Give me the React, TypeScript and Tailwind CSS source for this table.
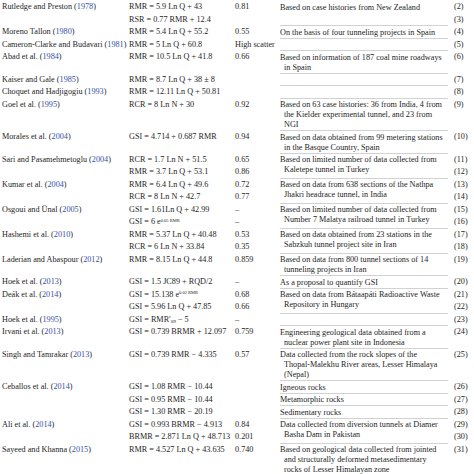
import type { ReactNode } from "react";

type Row = { eq: ReactNode; r?: string; n: number };
type Group = { author?: string; year?: string; rows: Row[]; desc?: string[] };

const rowSpan: Record<number, string> = {
  1: "row-span-1",
  2: "row-span-2",
  3: "row-span-3",
};

const groups: Group[] = [
  {
    author: "Rutledge and Preston",
    year: "1978",
    rows: [
      { eq: "RMR = 5.9 Ln Q + 43", r: "0.81", n: 2 },
      { eq: "RSR = 0.77 RMR + 12.4", n: 3 },
    ],
    desc: ["Based on case histories from New Zealand"],
  },
  {
    author: "Moreno Tallon",
    year: "1980",
    rows: [{ eq: "RMR = 5.4 Ln Q + 55.2", r: "0.55", n: 4 }],
    desc: ["On the basis of four tunneling projects in Spain"],
  },
  {
    author: "Cameron-Clarke and Budavari",
    year: "1981",
    rows: [{ eq: "RMR = 5 Ln Q + 60.8", r: "High scatter", n: 5 }],
  },
  {
    author: "Abad et al.",
    year: "1984",
    rows: [{ eq: "RMR = 10.5 Ln Q + 41.8", r: "0.66", n: 6 }],
    desc: ["Based on information of 187 coal mine roadways", "in Spain"],
  },
  {
    author: "Kaiser and Gale",
    year: "1985",
    rows: [{ eq: "RMR = 8.7 Ln Q + 38 ± 8", n: 7 }],
  },
  {
    author: "Choquet and Hadjigogiu",
    year: "1993",
    rows: [{ eq: "RMR = 12.11 Ln Q + 50.81", n: 8 }],
  },
  {
    author: "Goel et al.",
    year: "1995",
    rows: [{ eq: "RCR = 8 Ln N + 30", r: "0.92", n: 9 }],
    desc: [
      "Based on 63 case histories: 36 from India, 4 from",
      "the Kielder experimental tunnel, and 23 from",
      "NGI",
    ],
  },
  {
    author: "Morales et al.",
    year: "2004",
    rows: [{ eq: "GSI = 4.714 + 0.687 RMR", r: "0.94", n: 10 }],
    desc: [
      "Based on data obtained from 99 metering stations",
      "in the Basque Country, Spain",
    ],
  },
  {
    author: "Sari and Pasamehmetoglu",
    year: "2004",
    rows: [
      { eq: "RCR = 1.7 Ln N + 51.5", r: "0.65", n: 11 },
      { eq: "RMR = 3.7 Ln Q + 53.1", r: "0.86", n: 12 },
    ],
    desc: [
      "Based on limited number of data collected from",
      "Kaletepe tunnel in Turkey",
    ],
  },
  {
    author: "Kumar et al.",
    year: "2004",
    rows: [
      { eq: "RMR = 6.4 Ln Q + 49.6", r: "0.72", n: 13 },
      { eq: "RCR = 8 Ln N + 42.7", r: "0.77", n: 14 },
    ],
    desc: [
      "Based on data from 638 sections of the Nathpa",
      "Jhakri headrace tunnel, in India",
    ],
  },
  {
    author: "Osgoui and Ünal",
    year: "2005",
    rows: [
      { eq: "GSI = 1.61Ln Q + 42.99", r: "–", n: 15 },
      {
        eq: (
          <>
            GSI = 6 e<sup className="text-[4.5px]">0.05 RMR</sup>
          </>
        ),
        r: "–",
        n: 16,
      },
    ],
    desc: [
      "Based on limited number of data collected from",
      "Number 7 Malatya railroad tunnel in Turkey",
    ],
  },
  {
    author: "Hashemi et al.",
    year: "2010",
    rows: [
      { eq: "RMR = 5.37 Ln Q + 40.48", r: "0.53", n: 17 },
      { eq: "RCR = 6 Ln N + 33.84", r: "0.35", n: 18 },
    ],
    desc: [
      "Based on data obtained from 23 stations in the",
      "Sabzkuh tunnel project site in Iran",
    ],
  },
  {
    author: "Laderian and Abaspour",
    year: "2012",
    rows: [{ eq: "RMR = 8.15 Ln Q + 44.8", r: "0.859", n: 19 }],
    desc: [
      "Based on data from 800 tunnel sections of 14",
      "tunneling projects in Iran",
    ],
  },
  {
    author: "Hoek et al.",
    year: "2013",
    rows: [{ eq: "GSI = 1.5 JC89 + RQD/2", r: "–", n: 20 }],
    desc: ["As a proposal to quantify GSI"],
  },
  {
    author: "Deák et al.",
    year: "2014",
    rows: [
      {
        eq: (
          <>
            GSI = 15.138 e<sup className="text-[4.5px]">0.02 RMR</sup>
          </>
        ),
        r: "0.68",
        n: 21,
      },
      { eq: "GSI = 5.96 Ln Q + 47.85", r: "0.66", n: 22 },
    ],
    desc: [
      "Based on data from Bátaapáti Radioactive Waste",
      "Repository in Hungary",
    ],
  },
  {
    author: "Hoek et al.",
    year: "1995",
    rows: [
      {
        eq: (
          <>
            GSI = RMR′<sub className="text-[5px]">89</sub> − 5
          </>
        ),
        r: "–",
        n: 23,
      },
    ],
    desc: [],
  },
  {
    author: "Irvani et al.",
    year: "2013",
    rows: [{ eq: "GSI = 0.739 BRMR + 12.097", r: "0.759", n: 24 }],
    desc: [
      "Engineering geological data obtained from a",
      "nuclear power plant site in Indonesia",
    ],
  },
  {
    author: "Singh and Tamrakar",
    year: "2013",
    rows: [{ eq: "GSI = 0.739 RMR − 4.335", r: "0.57", n: 25 }],
    desc: [
      "Data collected from the rock slopes of the",
      "Thopal-Malekhu River areas, Lesser Himalaya",
      "(Nepal)",
    ],
  },
  {
    author: "Ceballos et al.",
    year: "2014",
    rows: [{ eq: "GSI = 1.08 RMR − 10.44", n: 26 }],
    desc: ["Igneous rocks"],
  },
  {
    rows: [{ eq: "GSI = 0.95 RMR − 10.44", n: 27 }],
    desc: ["Metamorphic rocks"],
  },
  {
    rows: [{ eq: "GSI = 1.30 RMR − 20.19", n: 28 }],
    desc: ["Sedimentary rocks"],
  },
  {
    author: "Ali et al.",
    year: "2014",
    rows: [
      { eq: "GSI = 0.993 BRMR − 4.913", r: "0.84", n: 29 },
      { eq: "BRMR = 2.871 Ln Q + 48.713", r: "0.201", n: 30 },
    ],
    desc: [
      "Data collected from diversion tunnels at Diamer",
      "Basha Dam in Pakistan",
    ],
  },
  {
    author: "Sayeed and Khanna",
    year: "2015",
    rows: [{ eq: "RMR = 4.527 Ln Q + 43.635", r: "0.740", n: 31 }],
    desc: [
      "Based on geological data collected from jointed",
      "and structurally deformed metasedimentary",
      "rocks of Lesser Himalayan zone",
    ],
  },
  {
    author: "Zhang et al.",
    year: "2019",
    rows: [
      {
        eq: (
          <>
            RMR′<sub className="text-[5px]">89</sub> = 0.827 GSI + 15.394
          </>
        ),
        r: "–",
        n: 32,
      },
    ],
    desc: [
      "Based on 260 groups of field investigating results",
      "collected and obtained from the tunnel face of six",
    ],
  },
];

function GroupRow({ g, first }: { g: Group; first: boolean }) {
  const span = Math.max(g.rows.length, 1);
  return (
    <div className="grid grid-cols-[127px_106px_45px_168px_1fr] items-start">
      <div className="col-start-1 row-start-1 whitespace-nowrap pt-[1px] leading-[11.5px]">
        {g.author}
        {g.year && (
          <>
            {" "}
            (<span className="text-[#3550a8]">{g.year}</span>)
          </>
        )}
      </div>
      {g.rows.map((row, i) => (
        <div key={row.n} className="contents">
          <div
            className={`col-start-2 whitespace-nowrap pt-[1px] leading-[11.5px] ${
              i === 0 ? "row-start-1" : "row-start-2"
            }`}
          >
            {row.eq}
          </div>
          <div
            className={`col-start-3 whitespace-nowrap pt-[1px] leading-[11.5px] ${
              i === 0 ? "row-start-1" : "row-start-2"
            }`}
          >
            {row.r}
          </div>
          <div
            className={`col-start-5 whitespace-nowrap pl-[6px] pt-[1px] leading-[11.5px] ${
              i === 0 ? "row-start-1" : "row-start-2"
            }`}
          >
            ({row.n})
          </div>
        </div>
      ))}
      <div
        className={`col-start-4 row-start-1 self-stretch pt-[1.5px] leading-[10px] ${rowSpan[span]} ${
          first ? "border-t border-transparent" : "border-t border-[#d2d2d2]"
        }`}
      >
        {(g.desc ?? []).map((line, i) => (
          <div key={line} className={`whitespace-nowrap ${i > 0 ? "pl-[4px]" : ""}`}>
            {line}
          </div>
        ))}
      </div>
    </div>
  );
}

export default function App() {
  return (
    <main className="h-[474px] w-[474px] overflow-hidden bg-white pl-[2px] pt-[0px] font-['Liberation_Serif',serif] text-[8.2px] text-[#1e1e1e]">
      {groups.map((g, i) => (
        <GroupRow key={i} g={g} first={i === 0} />
      ))}
    </main>
  );
}
